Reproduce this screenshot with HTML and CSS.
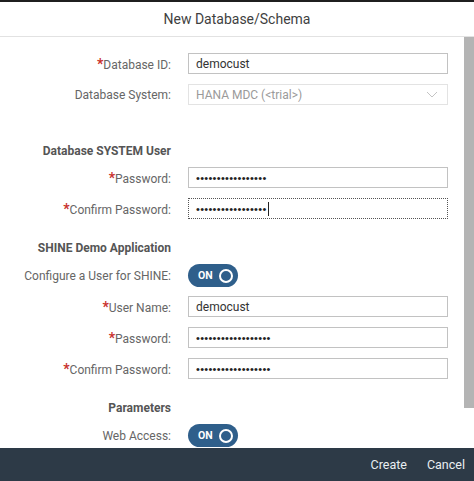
FILE: index.html
```html
<!DOCTYPE html>
<html lang="en">
<head>
    <meta charset="UTF-8">
    <title>New Database/Schema</title>
    <link rel="stylesheet" href="styles.css">
</head>
<body>
    <div class="dialog">
        <div class="dialog-header">New Database/Schema</div>

        <div class="dialog-body">
            <div class="form">
                <div class="row">
                    <label class="label"><span class="req">*</span>Database ID:</label>
                    <input class="field" type="text" value="democust">
                </div>
                <div class="row">
                    <label class="label">Database System:</label>
                    <div class="field select">
                        <span>HANA MDC (&lt;trial&gt;)</span>
                        <svg width="12" height="7" viewBox="0 0 12 7"><path d="M1 1 L6 6 L11 1" fill="none" stroke="#c4c4c4" stroke-width="1"/></svg>
                    </div>
                </div>

                <div class="section-title first">Database SYSTEM User</div>
                <div class="row">
                    <label class="label"><span class="req">*</span>Password:</label>
                    <input class="field pwd" type="password" value="xxxxxxxxxxxxxxxxx">
                </div>
                <div class="row">
                    <label class="label"><span class="req">*</span>Confirm Password:</label>
                    <div class="field pwd focused">•••••••••••••••••<span class="caret"></span></div>
                </div>

                <div class="section-title">SHINE Demo Application</div>
                <div class="row toggle-row">
                    <label class="label">Configure a User for SHINE:</label>
                    <div class="switch"><span>ON</span><i class="knob"></i></div>
                </div>
                <div class="row">
                    <label class="label"><span class="req">*</span>User Name:</label>
                    <input class="field" type="text" value="democust">
                </div>
                <div class="row">
                    <label class="label"><span class="req">*</span>Password:</label>
                    <input class="field pwd" type="password" value="xxxxxxxxxxxxxxxxxx">
                </div>
                <div class="row">
                    <label class="label"><span class="req">*</span>Confirm Password:</label>
                    <input class="field pwd" type="password" value="xxxxxxxxxxxxxxxxxx">
                </div>

                <div class="section-title">Parameters</div>
                <div class="row toggle-row">
                    <label class="label">Web Access:</label>
                    <div class="switch"><span>ON</span><i class="knob"></i></div>
                </div>
            </div>
            <div class="scrollbar"><div class="thumb"></div></div>
        </div>

        <div class="dialog-footer">
            <button class="btn">Create</button>
            <button class="btn">Cancel</button>
        </div>
    </div>
</body>
</html>
```

FILE: styles.css
```css
* {
    margin: 0;
    padding: 0;
    box-sizing: border-box;
}

body {
    font-family: Roboto, 'Liberation Sans', Arial, sans-serif;
    color: #333;
    background: #fff;
    width: 474px;
    height: 481px;
    overflow: hidden;
}

.dialog {
    display: flex;
    flex-direction: column;
    height: 481px;
    border-top: 2px solid #1f1f1f;
}

.dialog-header {
    height: 35px;
    line-height: 34px;
    text-align: center;
    font-size: 14px;
    color: #3f3f3f;
    border-bottom: 1px solid #e2e2e2;
    flex-shrink: 0;
}

.dialog-body {
    flex: 1;
    display: flex;
    overflow: hidden;
}

.form {
    flex: 1;
    padding-top: 16px;
}

.row {
    display: grid;
    grid-template-columns: 171px 260px;
    column-gap: 17px;
    align-items: center;
    height: 21px;
    margin-bottom: 10px;
}

.toggle-row {
    height: 23px;
    margin-bottom: 9px;
}

.label {
    text-align: right;
    font-size: 12px;
    color: #666;
    white-space: nowrap;
}

.req {
    color: #c9302c;
    font-size: 14px;
    font-weight: bold;
}

.field {
    height: 21px;
    border: 1px solid #c2c2c2;
    background: #fff;
    font-family: inherit;
    font-size: 12px;
    color: #333;
    padding: 0 7px;
    outline: none;
}

.pwd {
    font-family: 'Liberation Sans', Arial, sans-serif;
    font-size: 11px;
    letter-spacing: 0.3px;
    color: #222;
}

.focused {
    display: flex;
    align-items: center;
    border: 1px dotted #555;
}

.caret {
    display: inline-block;
    width: 1px;
    height: 14px;
    background: #222;
    margin-left: 1px;
}

.select {
    display: flex;
    align-items: center;
    justify-content: space-between;
    border-color: #e3e3e3;
    color: #9a9a9a;
    padding-right: 9px;
}

.section-title {
    width: 171px;
    text-align: right;
    font-size: 12px;
    font-weight: bold;
    color: #555;
    height: 16px;
    line-height: 16px;
    margin-top: 21px;
    margin-bottom: 8px;
}

.section-title.first {
    margin-top: 38px;
}

.switch {
    width: 50px;
    height: 23px;
    border-radius: 12px;
    background: #2f5f8b;
    display: flex;
    align-items: center;
    justify-content: space-between;
    padding: 0 5px 0 10px;
}

.switch span {
    color: #fff;
    font-size: 10.5px;
    font-weight: bold;
}

.knob {
    width: 14px;
    height: 14px;
    border: 2px solid #fff;
    border-radius: 50%;
}

.scrollbar {
    width: 10px;
    flex-shrink: 0;
}

.thumb {
    height: 371px;
    background: #b4b4b4;
}

.dialog-footer {
    height: 33px;
    flex-shrink: 0;
    background: #2d3a47;
    display: flex;
    justify-content: flex-end;
    align-items: center;
    gap: 20px;
    padding-right: 9px;
}

.btn {
    background: none;
    border: none;
    color: #e9eef2;
    font-family: inherit;
    font-size: 12.5px;
    cursor: pointer;
}
```
